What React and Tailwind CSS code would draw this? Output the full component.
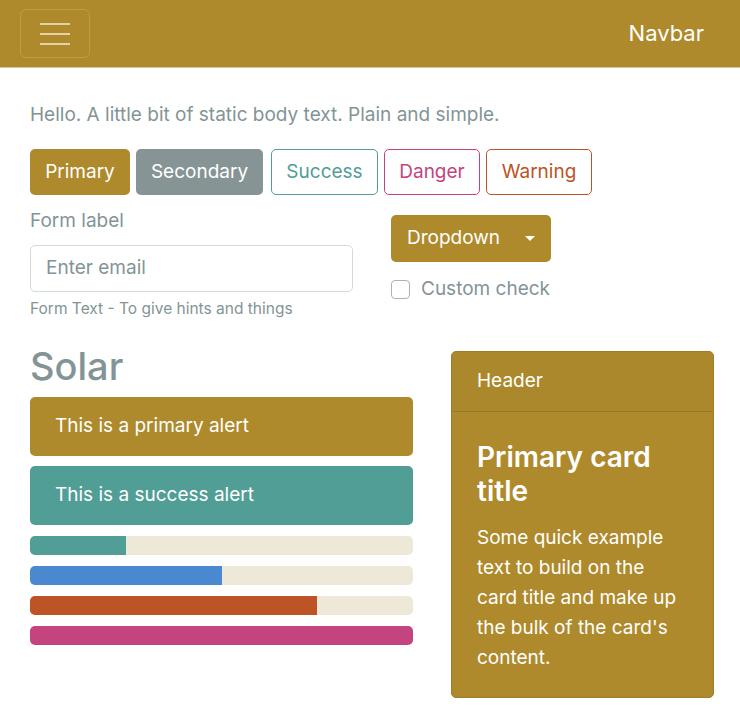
export default function App() {
  const bars = [
    { w: '25%', c: 'bg-[#519e97]' },
    { w: '50%', c: 'bg-[#4a89d0]' },
    { w: '75%', c: 'bg-[#bc5426]' },
    { w: '100%', c: 'bg-[#c4447f]' },
  ]

  return (
    <div className="min-h-[720px] bg-white font-['Inter',sans-serif] text-[19px] text-[#839496]">
      <nav className="flex h-[68px] items-center justify-between border-b border-[#d8c79a] bg-[#ae8a2c] pl-5 pr-9">
        <button className="flex h-[49px] w-[70px] flex-col items-center justify-center gap-[8px] rounded-[6px] border border-[#bd9c4a]">
          <span className="h-[2px] w-[30px] bg-[#e3d2a6]" />
          <span className="h-[2px] w-[30px] bg-[#e3d2a6]" />
          <span className="h-[2px] w-[30px] bg-[#e3d2a6]" />
        </button>
        <span className="text-[22px] text-white">Navbar</span>
      </nav>

      <div className="px-[30px] pt-[34px]">
        <p className="leading-[26px]">Hello. A little bit of static body text. Plain and simple.</p>

        <div className="mt-[21px] flex gap-[6px] text-[19px] leading-[22px]">
          <button className="h-[46px] w-[100px] rounded-[5px] bg-[#ae8a2c] text-white">Primary</button>
          <button className="h-[46px] w-[127px] rounded-[5px] bg-[#869496] text-white">Secondary</button>
          <button className="ml-[2px] h-[46px] w-[107px] rounded-[5px] border border-[#519e97] text-[#519e97]">Success</button>
          <button className="h-[46px] w-[96px] rounded-[5px] border border-[#c4447f] text-[#c4447f]">Danger</button>
          <button className="h-[46px] w-[106px] rounded-[5px] border border-[#bc5426] text-[#bc5426]">Warning</button>
        </div>

        <div className="mt-[15px] flex">
          <div className="w-[323px] shrink-0">
            <div className="leading-[22px]">Form label</div>
            <div className="mt-[13px] flex h-[47px] items-center rounded-[5px] border border-[#d6d9da] px-[15px] text-[#839496]">
              Enter email
            </div>
            <div className="mt-[8px] text-[15.5px] leading-[18px]">Form Text - To give hints and things</div>
          </div>
          <div className="ml-[38px] pt-[5px]">
            <button className="flex h-[47px] w-[160px] items-center rounded-[5px] bg-[#ae8a2c] pl-[16px] pr-[16px] text-[19px] text-white">
              <span>Dropdown</span>
              <span className="ml-auto h-0 w-0 border-x-[5px] border-t-[5px] border-x-transparent border-t-white" />
            </button>
            <label className="mt-[15px] flex items-center gap-[11px] leading-[24px]">
              <span className="h-[19px] w-[19px] rounded-[4px] border border-[#a9b3b4] bg-white" />
              Custom check
            </label>
          </div>
        </div>

        <div className="mt-[26px] flex items-start">
          <div className="w-[383px] shrink-0">
            <h1 className="text-[38px] font-medium leading-[44px] text-[#839496]">Solar</h1>
            <div className="mt-[9px] flex h-[59px] items-center rounded-[5px] bg-[#ae8a2c] px-[25px] text-white">
              This is a primary alert
            </div>
            <div className="mt-[10px] flex h-[59px] items-center rounded-[5px] bg-[#519e97] px-[25px] text-white">
              This is a success alert
            </div>
            <div className="mt-[11px] flex flex-col gap-[11px]">
              {bars.map((b) => (
                <div key={b.w} className="h-[19px] overflow-hidden rounded-[5px] bg-[#eee8d9]">
                  <div className={`h-full ${b.c}`} style={{ width: b.w }} />
                </div>
              ))}
            </div>
          </div>

          <div className="ml-[38px] mt-[7px] w-[263px] shrink-0 overflow-hidden rounded-[5px] border border-[#a07d25] bg-[#ae8a2c] text-white">
            <div className="flex h-[60px] items-center border-b border-[#9a7a26] bg-[#ab882b] px-[25px]">Header</div>
            <div className="px-[25px] pb-[24px] pt-[28px]">
              <h5 className="text-[28px] font-semibold leading-[34px]">Primary card title</h5>
              <p className="mt-[15px] leading-[30px]">
                Some quick example text to build on the card title and make up the bulk of the card's content.
              </p>
            </div>
          </div>
        </div>
      </div>
    </div>
  )
}
